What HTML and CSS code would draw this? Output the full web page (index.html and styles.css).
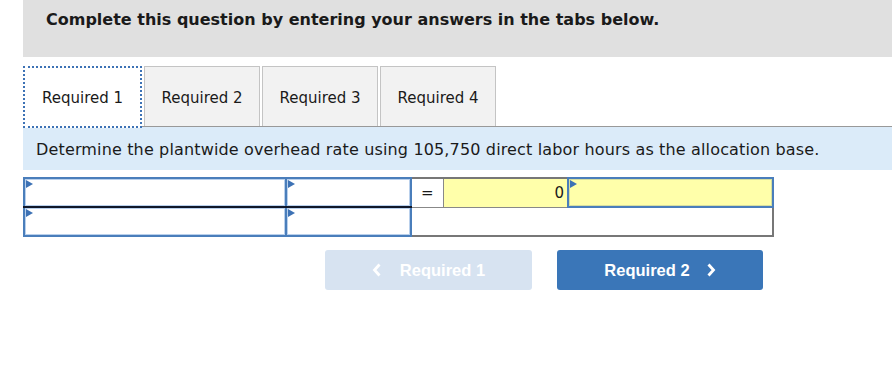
FILE: index.html
```html
<!DOCTYPE html>
<html>
<head>
	<title>Required 1</title>
	<link rel="stylesheet" href="styles.css">
</head>
<body>
	<div class="page">
		<div class="header">Complete this question by entering your answers in the tabs below.</div>

		<div class="tabs">
			<div class="tab active">Required 1</div>
			<div class="tab">Required 2</div>
			<div class="tab">Required 3</div>
			<div class="tab">Required 4</div>
		</div>

		<div class="band">Determine the plantwide overhead rate using 105,750 direct labor hours as the allocation base.</div>

		<table class="grid">
			<tr>
				<td class="c1 inp top"></td>
				<td class="c2 inp top"></td>
				<td class="c3 eq">=</td>
				<td class="c4 result">0</td>
				<td class="c5 inp yellow"></td>
			</tr>
			<tr>
				<td class="c1 inp"></td>
				<td class="c2 inp"></td>
				<td colspan="3" class="blank"></td>
			</tr>
		</table>

		<div class="nav">
			<div class="btn prev">
				<svg width="10" height="14" viewBox="0 0 10 14"><polyline points="7.5,1.5 2.5,7 7.5,12.5" fill="none" stroke="#fff" stroke-width="2.8"/></svg>
				<span>Required 1</span>
			</div>
			<div class="btn next">
				<span>Required 2</span>
				<svg width="10" height="14" viewBox="0 0 10 14"><polyline points="2.5,1.5 7.5,7 2.5,12.5" fill="none" stroke="#fff" stroke-width="2.8"/></svg>
			</div>
		</div>
	</div>
</body>
</html>
```

FILE: styles.css
```css
body {
	margin:0;
	font-family:"DejaVu Sans", Verdana, sans-serif;
	color:#1a1a1a;
}

.page {
	padding-left:23px;
}

.header {
	background:#e0e0e0;
	height:57px;
	padding-left:23px;
	box-sizing:border-box;
	padding-top:10px;
	font-size:16px;
	font-weight:bold;
}

.tabs {
	display:flex;
	gap:2px;
	margin-top:9px;
	height:60px;
	border-bottom:1px solid #999;
	padding-left:1px;
}
.tab {
	width:116px;
	box-sizing:border-box;
	background:#f2f2f2;
	border:1px solid #c4c4c4;
	border-bottom:none;
	font-size:15px;
	display:flex;
	align-items:center;
	justify-content:center;
	padding-top:2px;
}
.tab.active {
	width:119px;
	background:#fff;
	border:2px dotted #3d72b5;
	height:62px;
	margin-left:-1px;
	margin-right:0;
	position:relative;
	z-index:1;
}

.band {
	background:#dbebf9;
	height:43px;
	box-sizing:border-box;
	padding-left:13px;
	padding-top:13px;
	font-size:16px;
	letter-spacing:0.15px;
}

.grid {
	margin-top:7px;
	border-collapse:collapse;
	border:2px solid #777;
}
.grid td {
	padding:0;
	height:29px;
	box-sizing:border-box;
	position:relative;
	font-size:15px;
}
.c1 { width:262px; }
.c2 { width:125px; }
.c3 { width:32px; }
.c4 { width:125px; }
.c5 { width:205px; }

.inp {
	border:2px solid #4a7ebb;
	box-shadow:inset 0 0 0 1px #b9d0ec;
	background:#fff;
}
.inp.top {
	border-bottom:2px solid #10182a;
}
.inp.yellow {
	background:#ffffaa;
	box-shadow:inset 0 0 0 1px #d6dfa0;
}
.inp::before {
	content:"";
	position:absolute;
	left:1px;
	top:1px;
	border-left:7px solid #3d72b5;
	border-top:4px solid transparent;
	border-bottom:4px solid transparent;
}

.eq {
	text-align:center;
	border-right:1px solid #888;
	border-bottom:1px solid #888;
	background:#fff;
}
.result {
	background:#ffffaa;
	text-align:right;
	padding-right:3px !important;
	border-bottom:1px solid #888;
}
.blank {
	background:#fff;
}

.nav {
	display:flex;
	gap:25px;
	margin-top:13px;
	padding-left:302px;
}
.btn {
	width:207px;
	height:40px;
	border-radius:3px;
	display:flex;
	align-items:center;
	justify-content:center;
	gap:18px;
	color:#fff;
	font-family:"Liberation Sans", Arial, sans-serif;
	font-weight:bold;
	font-size:16.5px;
}
.prev {
	background:#d7e3f1;
}
.next {
	width:206px;
	background:#3a76b8;
	gap:16px;
}
```
